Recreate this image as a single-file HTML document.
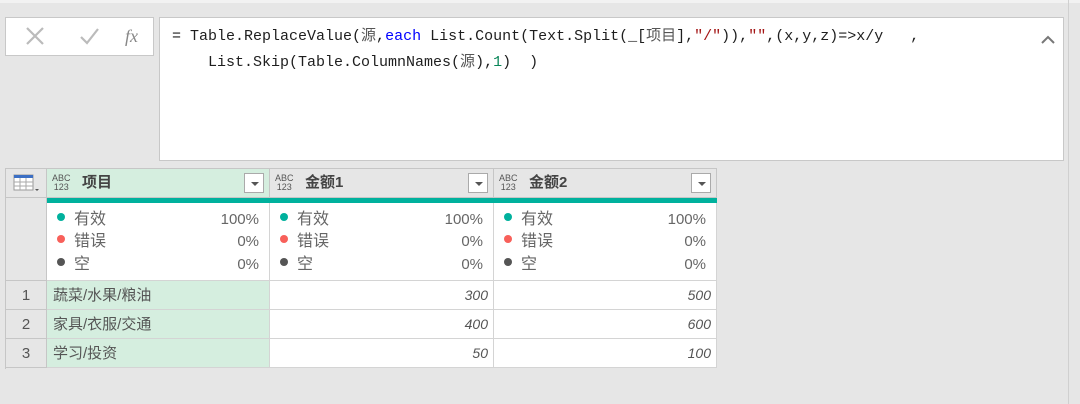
<!DOCTYPE html>
<html><head><meta charset="utf-8"><style>
*{margin:0;padding:0;box-sizing:border-box}
body{width:1080px;height:404px;background:#e6e6e6;position:relative;overflow:hidden;font-family:"Liberation Sans","Noto Sans CJK SC",sans-serif}
.top{position:absolute;left:0;top:0;width:1080px;height:3px;background:#f2f2f2}
.fx{position:absolute;left:5px;top:17px;width:149px;height:39px;background:#fff;border:1px solid #c8c8c8}
.formula{position:absolute;left:159px;top:17px;width:905px;height:144px;background:#fff;border:1px solid #c8c8c8;font-family:"Liberation Mono","Noto Sans CJK SC",monospace;font-size:15px;color:#1e1e1e}
.formula div{position:absolute;white-space:pre;line-height:20px}
.k{color:#0000ff}.s{color:#a31515}.n{color:#098658}.c{color:#555}
.vline{position:absolute;left:1068px;top:0;width:1px;height:404px;background:#d0d0d0}
.cell{position:absolute;border-right:1px solid #d4d4d4;border-bottom:1px solid #d4d4d4}
.hdr{background:#e6e6e6;border-color:#c6c6c6;top:168px;height:30px}
.abc{position:absolute;left:5px;top:5px;font-size:9px;line-height:9px;color:#555;text-align:center}
.hname{position:absolute;left:35px;top:4px;font-size:15px;line-height:20px;font-weight:bold;color:#444}
.dd{position:absolute;right:5px;top:4px;width:20px;height:20px;background:#fff;border:1px solid #aaa}
.dd:after{content:"";position:absolute;left:6px;top:8px;border-left:4px solid transparent;border-right:4px solid transparent;border-top:4px solid #555}
.prof{top:203px;height:78px;background:#fff}
.pl{position:absolute;left:10px;font-size:16px;line-height:20px;color:#666}
.pl i{display:inline-block;width:8px;height:8px;border-radius:50%;margin-right:9px;vertical-align:3px}
.pr{position:absolute;right:10px;font-size:15px;line-height:20px;color:#666}
.row{height:29px;font-size:15px;color:#555;line-height:29px}
.num{background:#e6e6e6;text-align:center;border-color:#c6c6c6}
.g{background:#d5eedf;padding-left:6px}
.v{background:#fff;text-align:right;padding-right:5px;font-style:italic;font-size:14px}
</style></head><body>
<div class="top"></div>
<div class="vline"></div>
<div class="fx">
<svg width="149" height="39" style="position:absolute;left:0;top:0">
<path d="M21 10 L37 26 M37 10 L21 26" stroke="#bbb" stroke-width="2.2" fill="none"/>
<path d="M75 19 L81 25 L92 11" stroke="#bbb" stroke-width="2.2" fill="none"/>
<text x="119" y="24" font-family="Liberation Serif" font-style="italic" font-size="18" fill="#888">fx</text>
</svg>
</div>
<div class="formula">
<div style="left:12px;top:9px">= Table.ReplaceValue(<span class="c">源</span>,<span class="k">each</span> List.Count(Text.Split(_[<span class="c">项目</span>],<span class="s">"/"</span>)),<span class="s">""</span>,(x,y,z)=&gt;x/y   ,</div>
<div style="left:48px;top:35px">List.Skip(Table.ColumnNames(<span class="c">源</span>),<span class="n">1</span>)  )</div>
<svg width="16" height="10" style="position:absolute;left:880px;top:17px"><path d="M2 8 L8 2 L14 8" stroke="#777" stroke-width="2" fill="none"/></svg>
</div>
<div style="position:absolute;left:5px;top:168px;width:712px;height:201px;border:1px solid #c6c6c6;border-right:none;border-bottom:none"></div>
<div class="cell hdr" style="left:5px;width:42px;border-left:1px solid #c6c6c6;border-top:1px solid #c6c6c6">
<svg width="30" height="20" style="position:absolute;left:7px;top:4px"><rect x="1" y="2" width="19" height="15" fill="#fff" stroke="#999"/><rect x="1" y="2" width="19" height="3" fill="#3c6fc4"/><path d="M1 9H20M1 13H20M7 5V17M13 5V17" stroke="#aaa"/><path d="M22 16 L26 16 L24 18Z" fill="#555"/></svg>
</div>
<div class="cell hdr" style="left:47px;width:223px;background:#d5eedf;border-top:1px solid #c6c6c6"><div class="abc">ABC<br>123</div><div class="hname">项目</div><div class="dd"></div></div>
<div class="cell hdr" style="left:270px;width:224px;border-top:1px solid #c6c6c6"><div class="abc">ABC<br>123</div><div class="hname">金额1</div><div class="dd"></div></div>
<div class="cell hdr" style="left:494px;width:223px;border-top:1px solid #c6c6c6"><div class="abc">ABC<br>123</div><div class="hname">金额2</div><div class="dd"></div></div>
<div style="position:absolute;left:47px;top:198px;width:670px;height:5px;background:#00b19d"></div>
<div class="cell" style="left:5px;top:198px;width:42px;height:83px;background:#e6e6e6;border-left:1px solid #c6c6c6;border-color:#c6c6c6"></div>
<div class="cell prof" style="left:47px;width:223px"><div class="pl" style="top:7px"><i style="background:#00b19d"></i>有效</div><div class="pr" style="top:7px">100%</div><div class="pl" style="top:29px"><i style="background:#f8605a"></i>错误</div><div class="pr" style="top:29px">0%</div><div class="pl" style="top:52px"><i style="background:#555"></i>空</div><div class="pr" style="top:52px">0%</div></div>
<div class="cell prof" style="left:270px;width:224px"><div class="pl" style="top:7px"><i style="background:#00b19d"></i>有效</div><div class="pr" style="top:7px">100%</div><div class="pl" style="top:29px"><i style="background:#f8605a"></i>错误</div><div class="pr" style="top:29px">0%</div><div class="pl" style="top:52px"><i style="background:#555"></i>空</div><div class="pr" style="top:52px">0%</div></div>
<div class="cell prof" style="left:494px;width:223px"><div class="pl" style="top:7px"><i style="background:#00b19d"></i>有效</div><div class="pr" style="top:7px">100%</div><div class="pl" style="top:29px"><i style="background:#f8605a"></i>错误</div><div class="pr" style="top:29px">0%</div><div class="pl" style="top:52px"><i style="background:#555"></i>空</div><div class="pr" style="top:52px">0%</div></div>

<div class="cell row num" style="left:5px;top:281px;width:42px;border-left:1px solid #c6c6c6">1</div>
<div class="cell row g" style="left:47px;top:281px;width:223px">蔬菜/水果/粮油</div>
<div class="cell row v" style="left:270px;top:281px;width:224px">300</div>
<div class="cell row v" style="left:494px;top:281px;width:223px">500</div>
<div class="cell row num" style="left:5px;top:310px;width:42px;border-left:1px solid #c6c6c6">2</div>
<div class="cell row g" style="left:47px;top:310px;width:223px">家具/衣服/交通</div>
<div class="cell row v" style="left:270px;top:310px;width:224px">400</div>
<div class="cell row v" style="left:494px;top:310px;width:223px">600</div>
<div class="cell row num" style="left:5px;top:339px;width:42px;border-left:1px solid #c6c6c6;border-bottom-color:#c6c6c6">3</div>
<div class="cell row g" style="left:47px;top:339px;width:223px">学习/投资</div>
<div class="cell row v" style="left:270px;top:339px;width:224px">50</div>
<div class="cell row v" style="left:494px;top:339px;width:223px">100</div>
</body></html>
